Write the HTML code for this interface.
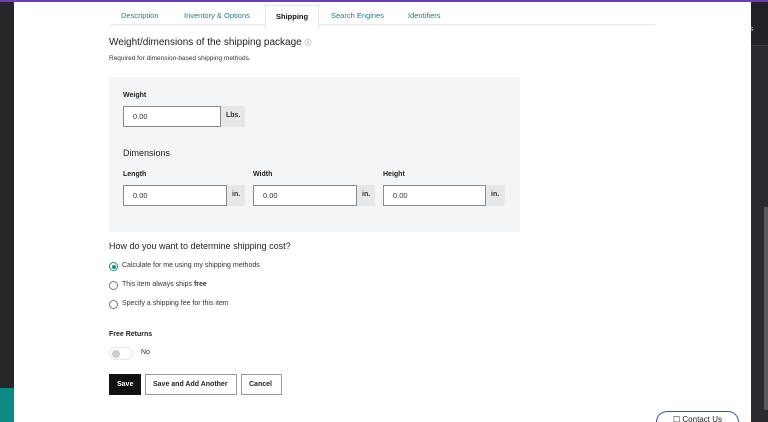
<!DOCTYPE html>
<html style="overflow:hidden;width:768px;height:422px"><head><style>
*{box-sizing:border-box;margin:0;padding:0}
body{width:768px;height:422px;overflow:hidden;background:#26272b;font-family:"Liberation Sans",sans-serif;position:relative;color:#111}
.l{position:absolute;left:0;top:0;width:14px;height:422px;background:#26272b}
.teal{position:absolute;left:0;top:388px;width:14px;height:34px;background:#0f8a86}
.r{position:absolute;left:751px;top:0;width:17px;height:422px;background:#2a2b30}
.rt{position:absolute;left:751px;top:0;width:17px;height:46px;background:#222327;border-bottom:1px solid #3a3b40}
.sb{position:absolute;left:764px;top:207px;width:4px;height:203px;background:#58595d}
.top{position:absolute;left:0;top:0;width:768px;height:2px;background:#6a3fb0}
.p{position:absolute;left:14px;top:2px;width:737px;height:420px;background:#fff}
.a{position:absolute;font-size:7.5px;color:#333}
.tabs{position:absolute;left:110px;top:2px;width:545px;height:23px;border-bottom:1px solid #e8e8e8}
.tab{position:absolute;top:9px;font-size:7.5px;color:#2b7a86}
.tab.on{top:3px;height:23px;background:#fff;border:1px solid #e4e4e4;border-bottom:none;color:#111;padding:6px 10px 0;font-weight:bold}
.gray{position:absolute;left:109px;top:77px;width:411px;height:155px;background:#f4f5f6}
.in{position:absolute;height:21px;background:#fff;border:1px solid #8a8a8a;font-size:7.5px;padding:5px 9px;color:#333}
.u{position:absolute;height:21px;background:#e6e7e9;font-size:7px;font-weight:bold;padding:6px 0 0 5px;color:#333}
.rad{position:absolute;left:109px;width:9px;height:9px;border:1px solid #777;border-radius:50%}
.btn{position:absolute;top:374px;height:21px;border:1px solid #999;font-size:7px;font-weight:bold;padding:6px 7px;color:#222}
</style></head><body>
<div class="l"></div><div class="teal"></div><div class="r"></div><div class="rt"></div><div class="sb"></div>
<div style="position:absolute;left:750px;top:26px;font-size:7px;color:#ccc">s</div>
<div class="top"></div>
<div class="p"></div>
<div class="tabs">
<span class="tab" style="left:11px">Description</span>
<span class="tab" style="left:74px">Inventory &amp; Options</span>
<span class="tab on" style="left:155px">Shipping</span>
<span class="tab" style="left:221px">Search Engines</span>
<span class="tab" style="left:298px">Identifiers</span>
</div>
<div class="a" style="left:109px;top:37px;font-size:10px;color:#222">Weight/dimensions of the shipping package <span style="font-size:7px;color:#666">ⓘ</span></div>
<div class="a" style="left:109px;top:55px;font-size:6.5px">Required for dimension-based shipping methods.</div>
<div class="gray"></div>
<div class="a" style="left:123px;top:92px;font-size:7px;font-weight:bold;color:#222">Weight</div>
<div class="in" style="left:123px;top:106px;width:98px">0.00</div><div class="u" style="left:221px;top:106px;width:24px">Lbs.</div>
<div class="a" style="left:123px;top:148px;font-size:9px;color:#222">Dimensions</div>
<div class="a" style="left:123px;top:171px;font-size:7px;font-weight:bold;color:#222">Length</div>
<div class="a" style="left:253px;top:171px;font-size:7px;font-weight:bold;color:#222">Width</div>
<div class="a" style="left:383px;top:171px;font-size:7px;font-weight:bold;color:#222">Height</div>
<div class="in" style="left:123px;top:185px;width:104px">0.00</div><div class="u" style="left:227px;top:185px;width:18px">in.</div>
<div class="in" style="left:253px;top:185px;width:104px">0.00</div><div class="u" style="left:357px;top:185px;width:18px">in.</div>
<div class="in" style="left:383px;top:185px;width:103px">0.00</div><div class="u" style="left:486px;top:185px;width:19px">in.</div>
<div class="a" style="left:109px;top:241px;font-size:9px;color:#222">How do you want to determine shipping cost?</div>
<div class="rad" style="top:262px;border-color:#1a8f8a"><div style="position:absolute;left:1.5px;top:1.5px;width:4px;height:4px;border-radius:50%;background:#1a8f8a"></div></div>
<div class="a" style="left:122px;top:262px;font-size:7px">Calculate for me using my shipping methods</div>
<div class="rad" style="top:281px"></div>
<div class="a" style="left:122px;top:281px;font-size:7px">This item always ships <b>free</b></div>
<div class="rad" style="top:300px"></div>
<div class="a" style="left:122px;top:300px;font-size:7px">Specify a shipping fee for this item</div>
<div class="a" style="left:109px;top:331px;font-size:7px;font-weight:bold;color:#222">Free Returns</div>
<div style="position:absolute;left:109px;top:347px;width:24px;height:13px;border:1px solid #e6e6e6;border-radius:7px;background:#fff"><div style="position:absolute;left:2px;top:2px;width:8px;height:8px;border-radius:50%;background:#ccc"></div></div>
<div class="a" style="left:141px;top:349px;font-size:7px">No</div>
<div class="btn" style="left:109px;width:32px;background:#111;color:#fff;border-color:#111">Save</div>
<div class="btn" style="left:145px;width:92px">Save and Add Another</div>
<div class="btn" style="left:241px;width:41px">Cancel</div>
<div style="position:absolute;left:656px;top:411px;width:83px;height:11px;border:1.5px solid #3a4fb0;border-bottom:none;border-radius:11px 11px 0 0;background:#fff;font-size:8px;padding:3px 0 0 16px;color:#222;overflow:hidden;line-height:9px">☐ Contact Us</div>
</body></html>
